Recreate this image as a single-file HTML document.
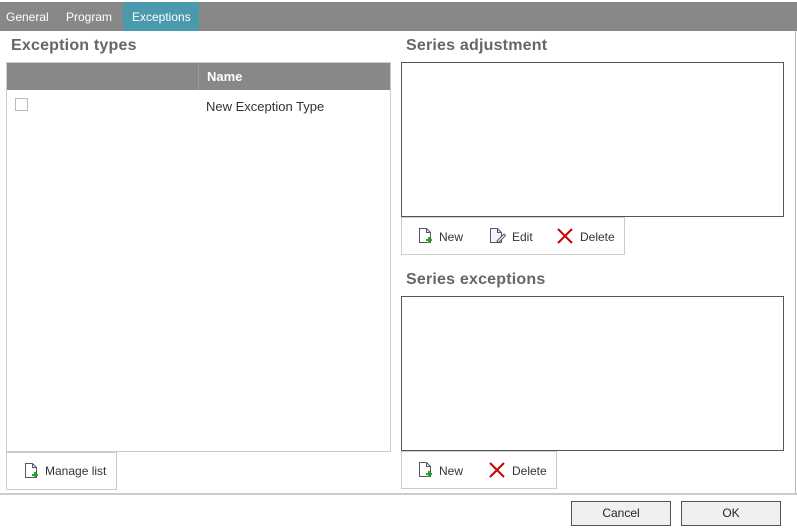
<!DOCTYPE html><html><head><style>
body{margin:0;width:797px;height:532px;background:#fff;font-family:"Liberation Sans",sans-serif;font-size:12px;color:#333;position:relative;overflow:hidden}
.a{position:absolute}
.h{font-weight:bold;font-size:16px;color:#666;letter-spacing:0.2px}
.bx{border:1px solid #555;background:#fff}
.tb{border:1px solid #ccc;background:#fff}
.btn{border:1px solid #555;background:#f0f0f0;text-align:center;line-height:23px;font-size:12px;color:#222}
</style></head><body>
<div class="a" style="left:0;top:2px;width:797px;height:29px;background:#888"></div>
<div class="a" style="left:123px;top:2px;width:76px;height:29px;background:#4a9aae"></div>
<div class="a" style="left:6px;top:10px;color:#fff">General</div>
<div class="a" style="left:66px;top:10px;color:#fff">Program</div>
<div class="a" style="left:132px;top:10px;color:#fff">Exceptions</div>
<div class="a" style="left:795px;top:31px;width:1px;height:463px;background:#bbb"></div>
<div class="a h" style="left:11px;top:37px">Exception types</div>
<div class="a" style="left:6px;top:62px;width:383px;height:388px;border:1px solid #ccc"></div>
<div class="a" style="left:7px;top:63px;width:383px;height:27px;background:#888"></div>
<div class="a" style="left:198px;top:63px;width:1px;height:27px;background:#999"></div>
<div class="a" style="left:207px;top:69px;color:#fff;font-weight:bold;font-size:13px">Name</div>
<div class="a" style="left:15px;top:98px;width:11px;height:11px;border:1px solid #bbb"></div>
<div class="a" style="left:206px;top:99px;font-size:13px">New Exception Type</div>
<div class="a tb" style="left:6px;top:452px;width:109px;height:36px"></div>
<svg class="a" style="left:24px;top:463px" width="16" height="16"><path d="M1.5 .5h7l4 4v10h-11z M8.5 .5v4h4" fill="#fff" stroke="#556"/><path d="M11 9v6M8 12h6" stroke="#2a2" stroke-width="2"/></svg>
<div class="a" style="left:45px;top:464px">Manage list</div>
<div class="a h" style="left:406px;top:37px">Series adjustment</div>
<div class="a bx" style="left:401px;top:62px;width:381px;height:153px"></div>
<div class="a tb" style="left:401px;top:217px;width:222px;height:36px"></div>
<svg class="a" style="left:418px;top:228px" width="16" height="16"><path d="M1.5 .5h7l4 4v10h-11z M8.5 .5v4h4" fill="#fff" stroke="#556"/><path d="M11 9v6M8 12h6" stroke="#2a2" stroke-width="2"/></svg>
<div class="a" style="left:439px;top:230px">New</div>
<svg class="a" style="left:489px;top:228px" width="18" height="16"><path d="M1.5 .5h7l4 4v10h-11z M8.5 .5v4h4" fill="#f4f4ff" stroke="#556"/><path d="M8 13l7-7 1.5 1.5-7 7z" fill="#fff" stroke="#556"/></svg>
<div class="a" style="left:512px;top:230px">Edit</div>
<svg class="a" style="left:557px;top:228px" width="16" height="16"><path d="M1 1l14 14M15 1L1 15" stroke="#c00" stroke-width="2"/></svg>
<div class="a" style="left:580px;top:230px">Delete</div>
<div class="a h" style="left:406px;top:271px">Series exceptions</div>
<div class="a bx" style="left:401px;top:296px;width:381px;height:153px"></div>
<div class="a tb" style="left:401px;top:451px;width:154px;height:36px"></div>
<svg class="a" style="left:418px;top:462px" width="16" height="16"><path d="M1.5 .5h7l4 4v10h-11z M8.5 .5v4h4" fill="#fff" stroke="#556"/><path d="M11 9v6M8 12h6" stroke="#2a2" stroke-width="2"/></svg>
<div class="a" style="left:439px;top:464px">New</div>
<svg class="a" style="left:489px;top:462px" width="16" height="16"><path d="M1 1l14 14M15 1L1 15" stroke="#c00" stroke-width="2"/></svg>
<div class="a" style="left:512px;top:464px">Delete</div>
<div class="a" style="left:0;top:493px;width:797px;height:2px;background:#ccc"></div>
<div class="a btn" style="left:571px;top:501px;width:98px;height:23px">Cancel</div>
<div class="a btn" style="left:681px;top:501px;width:98px;height:23px">OK</div>
</body></html>
